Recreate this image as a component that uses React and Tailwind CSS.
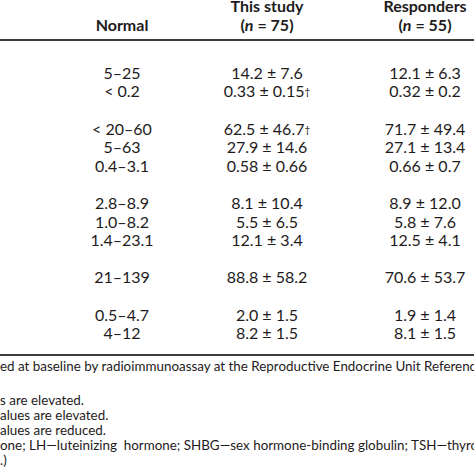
const rows = [
  null,
  ['5–25', '14.2 ± 7.6', '12.1 ± 6.3'],
  ['< 0.2', ['0.33 ± 0.15', true], '0.32 ± 0.2'],
  null,
  ['< 20–60', ['62.5 ± 46.7', true], '71.7 ± 49.4'],
  ['5–63', '27.9 ± 14.6', '27.1 ± 13.4'],
  ['0.4–3.1', '0.58 ± 0.66', '0.66 ± 0.7'],
  null,
  ['2.8–8.9', '8.1 ± 10.4', '8.9 ± 12.0'],
  ['1.0–8.2', '5.5 ± 6.5', '5.8 ± 7.6'],
  ['1.4–23.1', '12.1 ± 3.4', '12.5 ± 4.1'],
  null,
  ['21–139', '88.8 ± 58.2', '70.6 ± 53.7'],
  null,
  ['0.5–4.7', '2.0 ± 1.5', '1.9 ± 1.4'],
  ['4–12', '8.2 ± 1.5', '8.1 ± 1.5'],
];

const notes = [
  's are elevated.',
  'alues are elevated.',
  'alues are reduced.',
  'one; LH—luteinizing\u00a0 hormone; SHBG—sex hormone-binding globulin; TSH—thyroid-stimulating hormone.',
  '.)',
];

function Cell({ value }) {
  if (Array.isArray(value)) {
    return (
      <span>
        {value[0]}
        <sup className="text-[10px] relative -top-[2px]">†</sup>
      </span>
    );
  }
  return <span>{value}</span>;
}

const cols = 'grid grid-cols-[50px_144px_146px_170px] w-[510px]';

export default function App() {
  return (
    <div
      className="w-[474px] h-[474px] overflow-hidden bg-white text-[#1e1b1c]"
      style={{ fontFamily: 'Lato, "Open Sans", sans-serif' }}
    >
      {/* header */}
      <div className={`${cols} -mt-[3px] font-bold text-[16px] leading-[18.5px] text-center`}>
        <div />
        <div className="self-end">Normal</div>
        <div>
          <div>This study</div>
          <div>
            (<i>n</i> = 75)
          </div>
        </div>
        <div>
          <div>Responders</div>
          <div>
            (<i>n</i> = 55)
          </div>
        </div>
      </div>

      <div className="mt-[5px] h-[2px] bg-[#3c3c3c]" />

      {/* body */}
      <div className="pt-[4px] text-[16px]">
        {rows.map((row, i) =>
          row ? (
            <div key={i} className={`${cols} h-[18.6px] items-center text-center leading-none`}>
              <div />
              {row.map((v, j) => (
                <div key={j} className="whitespace-nowrap">
                  <Cell value={v} />
                </div>
              ))}
            </div>
          ) : (
            <div key={i} className="h-[18.6px]" />
          )
        )}
      </div>

      <div className="mt-[11px] h-[2px] bg-[#3c3c3c]" />

      {/* footnotes */}
      <div className="text-[13.4px] leading-[15px] whitespace-nowrap">
        <p className="mt-[3px]">
          ed at baseline by radioimmunoassay at the Reproductive Endocrine Unit Reference Laboratory.
        </p>
        <div className="mt-[19px]">
          {notes.map(n => (
            <p key={n}>{n}</p>
          ))}
        </div>
      </div>
    </div>
  );
}
